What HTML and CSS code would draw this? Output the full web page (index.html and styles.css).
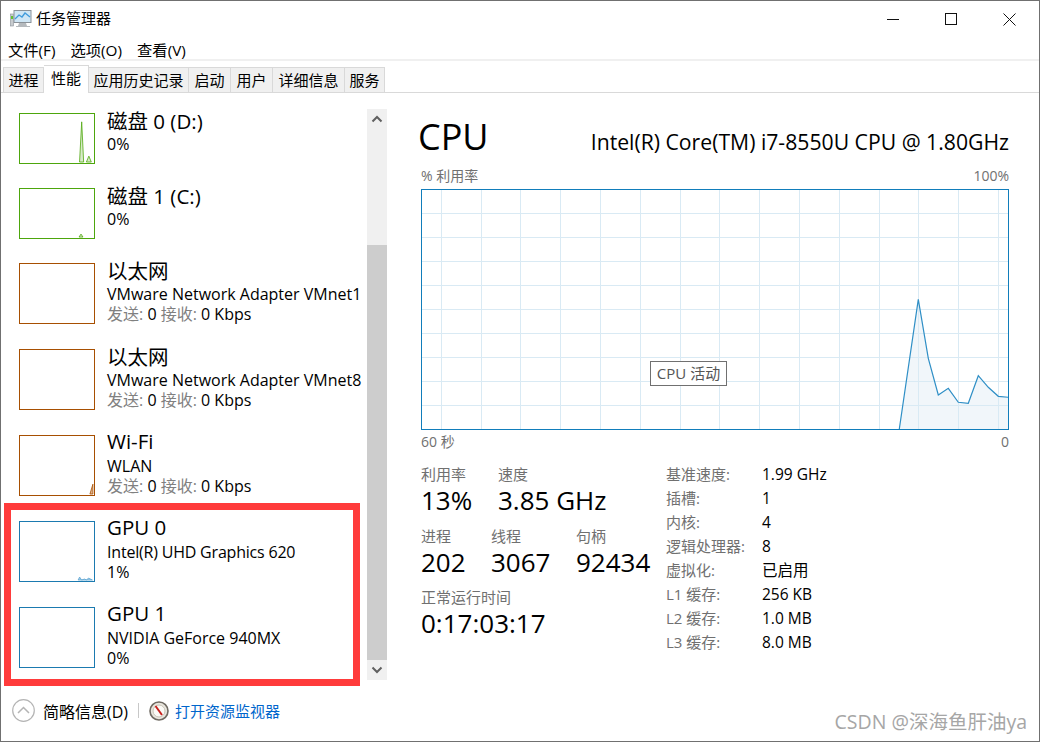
FILE: index.html
```html
<!DOCTYPE html>
<html lang="zh-CN">
<head>
    <meta charset="UTF-8">
    <meta name="viewport" content="width=device-width, initial-scale=1.0">
    <title>任务管理器</title>
    <link rel="stylesheet" href="styles.css">
</head>
<body>
<div class="window">
    <header class="titlebar">
        <svg class="app-icon" width="22" height="20" viewBox="0 0 22 20">
            <rect x="4" y="1.500" width="17" height="12" fill="#cfe6f5" stroke="#8a9299"/>
            <path d="M5 10l4-4 3 2 3-4 5 4" fill="none" stroke="#3f9bdc" stroke-width="1.300"/>
            <path d="M9 14h7l1 3h3v1H6v-1h2z" fill="#b5b9bd"/>
            <rect x="0.500" y="5" width="3" height="12" fill="#c8cccf" stroke="#8a9299" stroke-width=".6"/>
            <rect x="1" y="7" width="2" height="3" fill="#63c22f"/>
        </svg>
        <span class="title">任务管理器</span>
        <div class="win-buttons">
            <svg width="12" height="1" viewBox="0 0 12 1" class="btn-min"><rect width="12" height="1" fill="#111"/></svg>
            <svg width="12" height="12" viewBox="0 0 12 12" class="btn-max"><rect x=".5" y=".5" width="11" height="11" fill="none" stroke="#111"/></svg>
            <svg width="13" height="13" viewBox="0 0 13 13" class="btn-close"><path d="M.5.5l12 12M12.500.5l-12 12" fill="none" stroke="#111"/></svg>
        </div>
    </header>

    <nav class="menu">
        <span>文件(F)</span>
        <span>选项(O)</span>
        <span>查看(V)</span>
    </nav>

    <div class="tabs">
        <div class="tab">进程</div>
        <div class="tab active">性能</div>
        <div class="tab">应用历史记录</div>
        <div class="tab">启动</div>
        <div class="tab">用户</div>
        <div class="tab">详细信息</div>
        <div class="tab">服务</div>
    </div>

    <main class="content">
        <aside class="sidebar">
            <div class="device-list">
                <div class="device short">
                    <svg class="thumb disk" viewBox="0 0 75 50">
                        <path d="M60.500 49L62.700 8l2 41zM67.500 49l2.500-6 2.500 6z" fill="#d8ebc9" stroke="#4da60c" stroke-width=".8"/>
                    </svg>
                    <div class="device-text">
                        <div class="device-name">磁盘 0 (D:)</div>
                        <div class="device-sub">0%</div>
                    </div>
                </div>
                <div class="device short">
                    <svg class="thumb disk" viewBox="0 0 75 50">
                        <path d="M60 49l2-3 2 3z" fill="#d8ebc9" stroke="#4da60c" stroke-width=".8"/>
                    </svg>
                    <div class="device-text">
                        <div class="device-name">磁盘 1 (C:)</div>
                        <div class="device-sub">0%</div>
                    </div>
                </div>
                <div class="device">
                    <svg class="thumb net" viewBox="0 0 75 60"></svg>
                    <div class="device-text">
                        <div class="device-name">以太网</div>
                        <div class="device-sub">VMware Network Adapter VMnet1</div>
                        <div class="device-sub"><span class="muted">发送:</span> 0 <span class="muted">接收:</span> 0 Kbps</div>
                    </div>
                </div>
                <div class="device">
                    <svg class="thumb net" viewBox="0 0 75 60"></svg>
                    <div class="device-text">
                        <div class="device-name">以太网</div>
                        <div class="device-sub">VMware Network Adapter VMnet8</div>
                        <div class="device-sub"><span class="muted">发送:</span> 0 <span class="muted">接收:</span> 0 Kbps</div>
                    </div>
                </div>
                <div class="device">
                    <svg class="thumb net" viewBox="0 0 75 60">
                        <path d="M71 59l3-10v10z" fill="#e2b48e" stroke="#a74f01" stroke-width=".8"/>
                    </svg>
                    <div class="device-text">
                        <div class="device-name latin">Wi-Fi</div>
                        <div class="device-sub">WLAN</div>
                        <div class="device-sub"><span class="muted">发送:</span> 0 <span class="muted">接收:</span> 0 Kbps</div>
                    </div>
                </div>
                <div class="device">
                    <svg class="thumb gpu" viewBox="0 0 75 60">
                        <path d="M59 59l1.500-3 2 3 3-1 2 1 2-2 4 2z" fill="#a9cfe6" stroke="#5ca5d2" stroke-width=".8"/>
                    </svg>
                    <div class="device-text">
                        <div class="device-name latin">GPU 0</div>
                        <div class="device-sub tight">Intel(R) UHD Graphics 620</div>
                        <div class="device-sub">1%</div>
                    </div>
                </div>
                <div class="device">
                    <svg class="thumb gpu" viewBox="0 0 75 60"></svg>
                    <div class="device-text">
                        <div class="device-name latin">GPU 1</div>
                        <div class="device-sub">NVIDIA GeForce 940MX</div>
                        <div class="device-sub">0%</div>
                    </div>
                </div>
            </div>

            <div class="scrollbar">
                <svg class="arrow" width="12" height="8" viewBox="0 0 12 8"><path d="M1.500 6.500L6 2l4.500 4.500" fill="none" stroke="#606060" stroke-width="2"/></svg>
                <div class="scroll-space"></div>
                <div class="scroll-thumb"></div>
                <svg class="arrow" width="12" height="8" viewBox="0 0 12 8"><path d="M1.500 1.500L6 6l4.500-4.500" fill="none" stroke="#606060" stroke-width="2"/></svg>
            </div>

            <div class="highlight"></div>
        </aside>

        <section class="detail">
            <div class="detail-head">
                <h1>CPU</h1>
                <div class="cpu-model">Intel(R) Core(TM) i7-8550U CPU @ 1.80GHz</div>
            </div>
            <div class="axis axis-top"><span>% 利用率</span><span>100%</span></div>
            <div class="graph">
                <svg width="586" height="239" viewBox="422 190 586 239">
                    <polygon points="899.300,429 918.300,299.300 928.300,358.300 938.300,395 948.300,388.300 958.300,402.300 968.300,403.300 978.300,375.700 988.300,387.300 998.300,396.300 1008.300,397.300 1008.300,429" fill="#f1f6fa"/>
                    <path class="grid-lines" d="M441.500 190V429M481.500 190V429M520.500 190V429M560.500 190V429M600.500 190V429M640.500 190V429M680.500 190V429M719.500 190V429M759.500 190V429M799.500 190V429M839.500 190V429M879.500 190V429M918.500 190V429M958.500 190V429M998.500 190V429M422 213.500H1008M422 237.500H1008M422 261.500H1008M422 285.500H1008M422 309.500H1008M422 333.500H1008M422 357.500H1008M422 381.500H1008M422 405.500H1008"/>
                    <polyline points="899.300,429 918.300,299.300 928.300,358.300 938.300,395 948.300,388.300 958.300,402.300 968.300,403.300 978.300,375.700 988.300,387.300 998.300,396.300 1008.300,397.300" fill="none" stroke="#2f8fc6" stroke-width="1.200"/>
                </svg>
                <div class="graph-tip">CPU 活动</div>
            </div>
            <div class="axis axis-bottom"><span>60 秒</span><span>0</span></div>

            <div class="stats">
                <div class="stats-left">
                    <div class="stat-row">
                        <div class="stat stat-util"><label>利用率</label><strong>13%</strong></div>
                        <div class="stat"><label>速度</label><strong>3.85 GHz</strong></div>
                    </div>
                    <div class="stat-row">
                        <div class="stat stat-proc"><label>进程</label><strong>202</strong></div>
                        <div class="stat stat-thread"><label>线程</label><strong>3067</strong></div>
                        <div class="stat"><label>句柄</label><strong>92434</strong></div>
                    </div>
                    <div class="stat-row">
                        <div class="stat"><label>正常运行时间</label><strong>0:17:03:17</strong></div>
                    </div>
                </div>
                <dl class="stats-right">
                    <dt>基准速度:</dt><dd>1.99 GHz</dd>
                    <dt>插槽:</dt><dd>1</dd>
                    <dt>内核:</dt><dd>4</dd>
                    <dt>逻辑处理器:</dt><dd>8</dd>
                    <dt>虚拟化:</dt><dd>已启用</dd>
                    <dt>L1 缓存:</dt><dd>256 KB</dd>
                    <dt>L2 缓存:</dt><dd>1.0 MB</dd>
                    <dt>L3 缓存:</dt><dd>8.0 MB</dd>
                </dl>
            </div>
        </section>
    </main>

    <footer class="footer">
        <svg class="collapse" width="23" height="23" viewBox="0 0 23 23">
            <circle cx="11.500" cy="11.500" r="10.800" fill="#fff" stroke="#b4b4b4" stroke-width="1.200"/>
            <path d="M6 14l5.500-5.500L17 14" fill="none" stroke="#b4b4b4" stroke-width="1.500"/>
        </svg>
        <span class="fewer">简略信息(D)</span>
        <span class="divider"></span>
        <svg class="gauge" width="20" height="20" viewBox="0 0 20 20">
            <circle cx="10" cy="10" r="9" fill="#e9e6de" stroke="#6f6a62" stroke-width="1.600"/>
            <circle cx="10" cy="10" r="6" fill="#fbfaf6" stroke="#c9c4b8"/>
            <path d="M6.500 5l6.500 9" stroke="#c8201c" stroke-width="2"/>
        </svg>
        <span class="monitor-link">打开资源监视器</span>
    </footer>

    <div class="watermark">CSDN @深海鱼肝油ya</div>
</div>
</body>
</html>
```

FILE: styles.css
```css
* {
    box-sizing: border-box;
}
html, body {
    margin: 0;
    padding: 0;
    background-color: white;
}
body {
    font-family: "Open Sans", "Noto Sans CJK SC", sans-serif;
    color: #000;
}
.window {
    position: relative;
    width: 1040px;
    height: 742px;
    border: 1px solid #707070;
    overflow: hidden;
    display: flex;
    flex-direction: column;
}

/* title bar */
.titlebar {
    height: 38px;
    display: flex;
    align-items: center;
    padding: 0 0 2px 9px;
}
.app-icon {
    margin-right: 4px;
}
.title {
    font-size: 15px;
    line-height: 20px;
    margin-top: -2px;
}
.win-buttons {
    margin-left: auto;
    display: flex;
    align-items: center;
    gap: 46px;
    padding-right: 23px;
}

/* menu */
.menu {
    height: 22px;
    display: flex;
    align-items: center;
    gap: 15px;
    padding-left: 7px;
    font-size: 15.300px;
    border-bottom: 2px solid #f0f0f0;
}

/* tabs */
.tabs {
    height: 32px;
    display: flex;
    align-items: flex-end;
    padding-left: 2px;
    border-bottom: 1px solid #d9d9d9;
}
.tab {
    height: 26px;
    margin-bottom: -1px;
    font-size: 15px;
    line-height: 25px;
    text-align: center;
    white-space: nowrap;
    background-color: #f0f0f0;
    border: 1px solid #d9d9d9;
    border-left: none;
}
.tab:first-child {
    border-left: 1px solid #d9d9d9;
    width: 41px;
}
.tab:nth-child(3) {
    width: 100px;
}
.tab:nth-child(4), .tab:nth-child(5) {
    width: 42px;
}
.tab:nth-child(6) {
    width: 72px;
}
.tab:nth-child(7) {
    width: 40px;
}
.tab.active {
    width: 45px;
    height: 28px;
    background-color: white;
    border-bottom: none;
}

/* body of the window */
.content {
    flex: 1;
    display: flex;
    min-height: 0;
}
.sidebar {
    position: relative;
    width: 386px;
    display: flex;
}
.device-list {
    width: 366px;
    padding: 20px 0 0 18px;
}
.device {
    height: 86px;
    display: flex;
    gap: 12px;
}
.device.short {
    height: 75px;
}
.thumb {
    flex: none;
    width: 76px;
    height: 61px;
    border: 1px solid;
    background-color: white;
}
.device.short .thumb {
    height: 51px;
}
.thumb.disk {
    border-color: #4da60c;
}
.thumb.net {
    border-color: #a74f01;
}
.thumb.gpu {
    border-color: #1b7ab0;
}
.device-text {
    white-space: nowrap;
    margin-top: -5px;
}
.device-name {
    height: 26px;
    font-size: 20.500px;
    line-height: 26px;
}
.device-name.latin {
    line-height: 22px;
}
.device-sub {
    font-size: 16px;
    line-height: 20px;
}
.device-sub.tight {
    letter-spacing: -0.2px;
}
.muted {
    color: #808080;
}

/* scrollbar */
.scrollbar {
    width: 20px;
    margin: 16px 0 0 1px;
    background-color: #f0f0f0;
    display: flex;
    flex-direction: column;
    align-items: center;
}
.arrow {
    flex: none;
    margin: 6px 0;
}
.scroll-space {
    height: 116px;
}
.scroll-thumb {
    flex: 1;
    width: 100%;
    background-color: #cdcdcd;
}

/* red marker drawn on top of the screenshot */
.highlight {
    position: absolute;
    left: 3px;
    top: 410px;
    width: 356px;
    height: 183px;
    border: 7px solid #ff3b3b;
}

/* right pane */
.detail {
    width: 622px;
    padding: 0 0 0 34px;
    display: flex;
    flex-direction: column;
}
.detail-head {
    height: 74px;
    flex: none;
    display: flex;
    justify-content: space-between;
    align-items: baseline;
    padding-top: 19px;
}
.detail-head h1 {
    margin: 0 0 0 -3px;
    font-size: 36px;
    line-height: 50px;
    font-weight: normal;
}
.cpu-model {
    font-size: 21.200px;
    white-space: nowrap;
}
.axis {
    display: flex;
    justify-content: space-between;
    font-size: 14px;
    color: #707070;
}
.axis-top {
    height: 22px;
    line-height: 18px;
}
.axis-bottom {
    height: 30px;
    line-height: 24px;
}
.graph {
    position: relative;
    flex: none;
    width: 588px;
    height: 241px;
    border: 1px solid #117dbb;
}
.graph svg {
    display: block;
}
.grid-lines {
    fill: none;
    stroke: #d9eaf4;
    stroke-width: 1;
}
.graph-tip {
    position: absolute;
    left: 228px;
    top: 171px;
    width: 77px;
    height: 25px;
    text-align: center;
    font-size: 15px;
    line-height: 23px;
    color: #555;
    background-color: white;
    border: 1px solid #707070;
}

/* numbers below the graph */
.stats {
    display: flex;
    margin-top: 4px;
}
.stats-left {
    width: 245px;
    flex: none;
}
.stat-row {
    display: flex;
    height: 61.500px;
}
.stat label {
    display: block;
    font-size: 15px;
    line-height: 20px;
    color: #707070;
}
.stat strong {
    display: block;
    margin-top: -1px;
    font-size: 26px;
    line-height: 34px;
    font-weight: normal;
    white-space: nowrap;
}
.stat-util {
    width: 77px;
}
.stat-proc {
    width: 70px;
}
.stat-thread {
    width: 85px;
}
.stats-right {
    margin: 0;
    display: grid;
    grid-template-columns: 96px auto;
    grid-auto-rows: 24px;
    font-size: 15px;
    line-height: 20px;
}
.stats-right dt {
    color: #707070;
}
.stats-right dd {
    margin: 0;
    font-size: 15.500px;
}

/* footer */
.footer {
    height: 61px;
    display: flex;
    align-items: center;
    padding-left: 11px;
    flex: none;
    font-size: 15px;
}
.fewer {
    margin-left: 8px;
    font-size: 16px;
}
.divider {
    width: 1px;
    height: 15px;
    margin: 0 10px;
    background-color: #c8c8c8;
}
.monitor-link {
    margin-left: 6px;
    color: #0066cc;
}
.watermark {
    position: absolute;
    right: 12px;
    bottom: 6px;
    font-size: 19.500px;
    color: #a6a6a6;
}
```
